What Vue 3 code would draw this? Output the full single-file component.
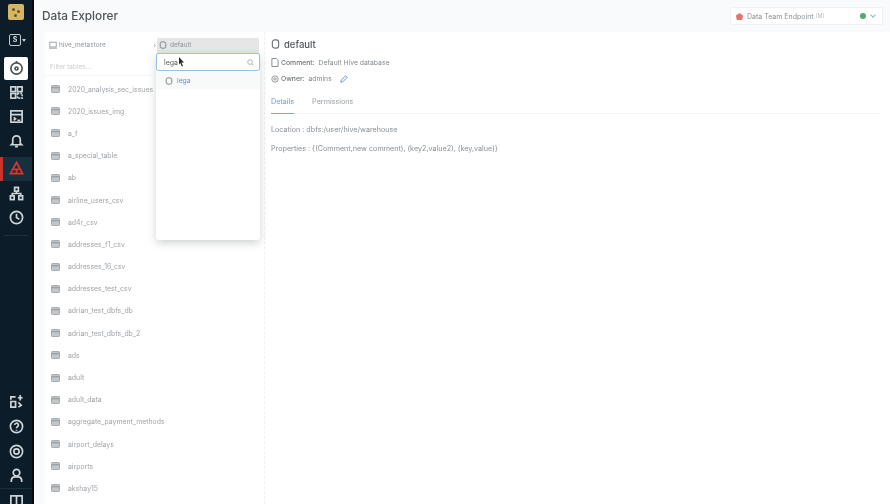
<template>
  <div class="app">
    <aside class="sidebar">
      <div class="side-top">
        <div class="logo"><i></i><i></i><i></i></div>
        <div class="workspace"><span class="ws-box">S</span><span class="ws-caret"></span></div>
        <div v-for="item in topNav" :key="item.id" class="nav-item" :class="{ active: item.active, alert: item.alert }">
          <svg width="15" height="15" viewBox="0 0 16 16" fill="none" stroke="currentColor" stroke-width="1.8" v-html="item.svg"></svg>
        </div>
        <div class="side-line"></div>
      </div>
      <div class="side-bottom">
        <div v-for="item in bottomNav" :key="item.id" class="nav-item small">
          <svg width="15" height="15" viewBox="0 0 16 16" fill="none" stroke="currentColor" stroke-width="1.8" v-html="item.svg"></svg>
        </div>
      </div>
    </aside>

    <div class="main">
      <header class="topbar">
        <h1>Data Explorer</h1>
        <div class="endpoint">
          <svg class="ep-icon" width="9" height="9" viewBox="0 0 10 10"><path d="M5 1l4 3-1 5H2L1 4z" fill="#e8736e" /></svg>
          <span class="ep-name">Data Team Endpoint</span>
          <span class="ep-size">(M)</span>
          <span class="ep-status"></span>
          <span class="ep-caret"></span>
        </div>
      </header>

      <div class="content">
        <section class="tables">
          <div class="crumbs">
            <div class="crumb-store">
              <svg width="8" height="8" viewBox="0 0 10 10" fill="none" stroke="#8a9096"><rect x="1" y="1.5" width="8" height="6" /><path d="M0 9h10" /></svg>
              <span>hive_metastore</span>
              <b>›</b>
            </div>
            <div class="crumb-db">
              <svg width="8" height="8" viewBox="0 0 10 10" fill="none" stroke="#7b8288" stroke-width="1.2"><rect x="1.5" y="1" width="7" height="8" rx="2.5" /></svg>
              <span>default</span>
            </div>
          </div>
          <div class="filter">Filter tables...</div>
          <ul class="table-list">
            <li v-for="t in tables" :key="t">
              <svg width="9" height="8" viewBox="0 0 10 9" fill="#c4c7ca" stroke="#9da2a6"><rect x="0.5" y="0.5" width="9" height="8" rx="1" /><path d="M0.5 3h9" stroke-width="1.6" /></svg>
              <span>{{ t }}</span>
            </li>
          </ul>

          <div class="db-popover">
            <div class="db-search">
              <span>lega</span>
              <svg class="cursor" width="7" height="10" viewBox="0 0 7 10"><path d="M1 0l5 5.5H3.500L5 9 3.800 9.600 2.400 6 1 7.500z" fill="#26292c" /></svg>
              <svg class="search-icon" width="7" height="7" viewBox="0 0 8 8" fill="none" stroke="#a9aeb2"><circle cx="3.500" cy="3.500" r="2.700" /><path d="M5.500 5.500L7.500 7.500" /></svg>
            </div>
            <div class="db-option">
              <svg width="8" height="8" viewBox="0 0 10 10" fill="none" stroke="#7b8288" stroke-width="1.2"><rect x="1.500" y="1" width="7" height="8" rx="2.500" /></svg>
              <span>lega</span>
            </div>
          </div>
        </section>

        <section class="details">
          <h2>
            <svg width="9" height="10" viewBox="0 0 10 11" fill="none" stroke="#70767b" stroke-width="1.3"><rect x="1.500" y="1" width="7" height="9" rx="2.500" /></svg>
            default
          </h2>
          <p class="meta meta-comment">
            <svg width="8" height="9" viewBox="0 0 9 10" fill="none" stroke="#7d8388"><path d="M1 .5h5l2 2v7H1z" /></svg>
            <strong>Comment:</strong> Default Hive database
          </p>
          <p class="meta meta-owner">
            <svg width="8" height="8" viewBox="0 0 10 10" fill="none" stroke="#7d8388"><circle cx="5" cy="5" r="4" /><circle cx="5" cy="5" r="1.500" /></svg>
            <strong>Owner:</strong> admins
            <svg class="edit" width="8" height="8" viewBox="0 0 10 10" fill="none" stroke="#5b93d6" stroke-width="1.200"><path d="M1 9l.5-2.500L7 1l2 2-5.500 5.500z" /></svg>
          </p>
          <div class="tabs">
            <span class="tab on">Details</span>
            <span class="tab">Permissions</span>
          </div>
          <p class="prop">Location : dbfs:/user/hive/warehouse</p>
          <p class="prop props">Properties : {(Comment,new comment), (key2,value2), (key,value)}</p>
        </section>
      </div>
    </div>
  </div>
</template>

<script setup>
const topNav = [
  { id: "explore", active: true, svg: '<circle cx="8" cy="8" r="6"/><circle cx="8" cy="8" r="1.600"/><path d="M8 0v2"/>' },
  { id: "grid", svg: '<rect x="2" y="2" width="5" height="5"/><rect x="9" y="2" width="5" height="5"/><rect x="2" y="9" width="5" height="5"/><path d="M9 9h5v5H9z" stroke-dasharray="2 1"/>' },
  { id: "sql", svg: '<rect x="2" y="2" width="12" height="12"/><path d="M2 6h12M5 9l2 1.500L5 12M9 12h3"/>' },
  { id: "bell", svg: '<path d="M4 11V7a4 4 0 0 1 8 0v4l1.500 1.500h-11zM6.500 14.500h3"/>' },
  { id: "data", alert: true, svg: '<path d="M8 1.500l6.500 12h-13z"/><path d="M4.500 9h7M8 9v4.500" />' },
  { id: "tree", svg: '<rect x="6" y="1.500" width="4" height="4"/><rect x="1.500" y="10.500" width="4" height="4"/><rect x="10.500" y="10.500" width="4" height="4"/><path d="M8 5.500V8M3.500 10.500V8h9v2.500"/>' },
  { id: "clock", svg: '<circle cx="8" cy="8" r="6.500"/><path d="M8 4v4l3 2"/>' },
];

const bottomNav = [
  { id: "flow", svg: '<path d="M2 8h5v6H2zM7 3H2v3M10 9l3 3-3 2M12 1v6M9.500 4h5"/>' },
  { id: "help", svg: '<circle cx="8" cy="8" r="6.500"/><path d="M6 6.500a2 2 0 1 1 3 1.700c-.7.400-1 .8-1 1.600M8 11.500v1"/>' },
  { id: "support", svg: '<circle cx="8" cy="8" r="6.500"/><circle cx="8" cy="8" r="2.800"/>' },
  { id: "user", svg: '<circle cx="8" cy="5" r="3.500"/><path d="M2.500 15v-2.500a4 4 0 0 1 4-3h3a4 4 0 0 1 4 3V15"/>' },
  { id: "panel", svg: '<rect x="2" y="2" width="12" height="12"/><path d="M8 2v12"/>' },
];

const tables = [
  "2020_analysis_sec_issues",
  "2020_issues_img",
  "a_f",
  "a_special_table",
  "ab",
  "airline_users_csv",
  "ad4r_csv",
  "addresses_f1_csv",
  "addresses_16_csv",
  "addresses_test_csv",
  "adrian_test_dbfs_db",
  "adrian_test_dbfs_db_2",
  "ads",
  "adult",
  "adult_data",
  "aggregate_payment_methods",
  "airport_delays",
  "airports",
  "akshay15",
];
</script>

<style>
html,
body {
  margin: 0;
  height: 100%;
  overflow: hidden;
  background: #fff;
}
</style>

<style scoped>
.app {
  display: flex;
  width: 890px;
  height: 504px;
  overflow: hidden;
  font-family: Inter, "Liberation Sans", sans-serif;
  filter: blur(0.7px);
  color: #6a7075;
}
.sidebar {
  width: 32px;
  flex: none;
  display: flex;
  flex-direction: column;
  justify-content: space-between;
  background: #0c1d29;
  border-right: 2px solid #04090d;
  color: #cfd6da;
  height: 504px;
}
.side-top {
  display: flex;
  flex-direction: column;
  align-items: center;
  padding-top: 4px;
}
.side-line {
  width: 24px;
  height: 1px;
  margin-top: 6px;
  background: #1d2f3b;
}
.logo {
  width: 16px;
  height: 16px;
  border-radius: 2px;
  background: #d6b664;
  position: relative;
}
.logo i {
  position: absolute;
  width: 3px;
  height: 3px;
  background: #6b5320;
  border-radius: 50%;
  left: 4px;
  top: 4px;
}
.logo i:nth-child(2) {
  left: 9px;
  top: 6px;
}
.logo i:nth-child(3) {
  left: 6px;
  top: 10px;
}
.workspace {
  margin-top: 12px;
  height: 16px;
  display: flex;
  align-items: center;
  gap: 1px;
  margin-left: 3px;
}
.ws-box {
  width: 12px;
  height: 12px;
  border: 1.5px solid #c4cbd0;
  box-sizing: border-box;
  border-radius: 2px;
  font-size: 7px;
  line-height: 9px;
  text-align: center;
  font-weight: 700;
}
.ws-caret {
  width: 0;
  height: 0;
  border: 2.5px solid transparent;
  border-top: 3px solid #c4cbd0;
  border-bottom: 0;
}
.nav-item {
  width: 32px;
  height: 24.300px;
  display: flex;
  align-items: center;
  justify-content: center;
  box-sizing: border-box;
}
.nav-item.active {
  width: 24px;
  height: 23px;
  margin: 9px 0 0;
  background: #fff;
  border-radius: 2px;
  color: #4c5357;
}
.nav-item.alert {
  height: 24px;
  margin-top: 4px;
  background: #16303f;
  border-left: 3px solid #c9332b;
  padding-right: 3px;
  color: #d9382e;
}
.side-bottom {
  display: flex;
  flex-direction: column;
  margin-bottom: -9px;
}
.nav-item.small {
  height: 24.750px;
}
.nav-item.small:last-child {
  border-top: 1px solid #1d2f3b;
}
.main {
  flex: 1;
  min-width: 0;
  display: flex;
  flex-direction: column;
  background: #f9fafb;
}
.topbar {
  height: 32px;
  flex: none;
  display: flex;
  align-items: center;
  justify-content: space-between;
  padding: 0 7px 0 8px;
  box-sizing: border-box;
}
h1 {
  margin: 0;
  font-size: 11.800px;
  font-weight: 500;
  color: #4d5459;
}
.endpoint {
  width: 153px;
  height: 18px;
  box-sizing: border-box;
  background: #fff;
  border: 1px solid #f0f2f3;
  display: flex;
  align-items: center;
  padding: 0 6px 0 4px;
  font-size: 7px;
  color: #8a8f94;
  white-space: nowrap;
}
.ep-name {
  margin-left: 3px;
}
.ep-size {
  margin-left: 2px;
  font-size: 5.500px;
  color: #b5babd;
}
.ep-status {
  width: 6px;
  height: 6px;
  border-radius: 50%;
  background: #54a874;
  margin-left: auto;
}
.ep-caret {
  width: 3px;
  height: 3px;
  border-right: 1px solid #aab0b3;
  border-bottom: 1px solid #aab0b3;
  transform: rotate(45deg);
  margin: -2px 1px 0 5px;
}
.content {
  flex: 1;
  min-height: 0;
  display: flex;
  margin-left: 11px;
  background: #fff;
}
.tables {
  width: 220px;
  flex: none;
  position: relative;
  box-sizing: border-box;
  border-right: 1px dashed #f0f1f2;
}
.crumbs {
  height: 26px;
  display: flex;
  align-items: center;
  font-size: 6.500px;
  color: #8f9498;
}
.crumb-store {
  width: 112px;
  flex: none;
  display: flex;
  align-items: center;
  gap: 2px;
  padding-left: 4px;
  box-sizing: border-box;
}
.crumb-store b {
  margin-left: auto;
  margin-right: 1px;
  font-weight: 400;
}
.crumb-db {
  width: 102px;
  height: 15px;
  flex: none;
  display: flex;
  align-items: center;
  gap: 3px;
  padding-left: 2px;
  box-sizing: border-box;
  background: #e6e6e7;
  color: #8b8f93;
}
.filter {
  width: 108px;
  height: 18px;
  line-height: 18px;
  padding-left: 5px;
  box-sizing: border-box;
  font-size: 6.500px;
  color: #c9cccf;
  border-bottom: 1px solid #f3f4f5;
}
.table-list {
  list-style: none;
  margin: 0;
  padding: 2px 0 0 6px;
}
.table-list li {
  height: 22.200px;
  display: flex;
  align-items: center;
  gap: 8px;
  font-size: 6.900px;
  color: #a0a4a8;
  white-space: nowrap;
  width: 102px;
}
.table-list svg {
  flex: none;
}
.db-popover {
  position: absolute;
  left: 111px;
  top: 21px;
  width: 104px;
  height: 187px;
  background: #fff;
  border-radius: 3px;
  box-shadow: 0 3px 9px rgba(40, 50, 60, 0.22);
}
.db-search {
  height: 18px;
  box-sizing: border-box;
  border: 1px solid #9dc1e6;
  border-radius: 2px;
  display: flex;
  align-items: center;
  padding: 0 5px 0 7px;
  font-size: 7px;
  color: #585d62;
  position: relative;
}
.cursor {
  position: absolute;
  left: 21px;
  top: 3px;
}
.search-icon {
  margin-left: auto;
}
.db-option {
  height: 17px;
  margin-top: 1px;
  background: #f8f9f9;
  display: flex;
  align-items: center;
  gap: 4px;
  padding-left: 9px;
  font-size: 6.800px;
  color: #5a93d8;
}
.details {
  flex: 1;
  min-width: 0;
  padding: 4px 0 0 6px;
}
h2 {
  margin: 0;
  height: 16px;
  display: flex;
  align-items: center;
  gap: 4px;
  font-size: 9.500px;
  font-weight: 500;
  color: #4e5459;
}
.meta {
  margin: 0;
  font-size: 6.800px;
  color: #84898e;
  display: flex;
  align-items: center;
  gap: 2px;
  white-space: pre;
}
.meta strong {
  font-weight: 500;
  color: #6e7378;
}
.meta-comment {
  margin-top: 5px;
  height: 11px;
}
.meta-owner {
  margin-top: 5px;
  height: 11px;
}
.edit {
  margin-left: 4px;
}
.tabs {
  margin-top: 7px;
  height: 22px;
  display: flex;
  gap: 18px;
  border-bottom: 1px solid #f3f4f5;
  font-size: 7.200px;
  color: #9a9ea2;
  margin-right: 9px;
}
.tab {
  line-height: 22px;
  height: 22px;
}
.tab.on {
  color: #6c9bd6;
  border-bottom: 1px solid #7ba6dc;
}
.prop {
  margin: 11px 0 0;
  font-size: 7.200px;
  line-height: 10px;
  color: #8a8f94;
}
.props {
  margin-top: 9px;
}
</style>
